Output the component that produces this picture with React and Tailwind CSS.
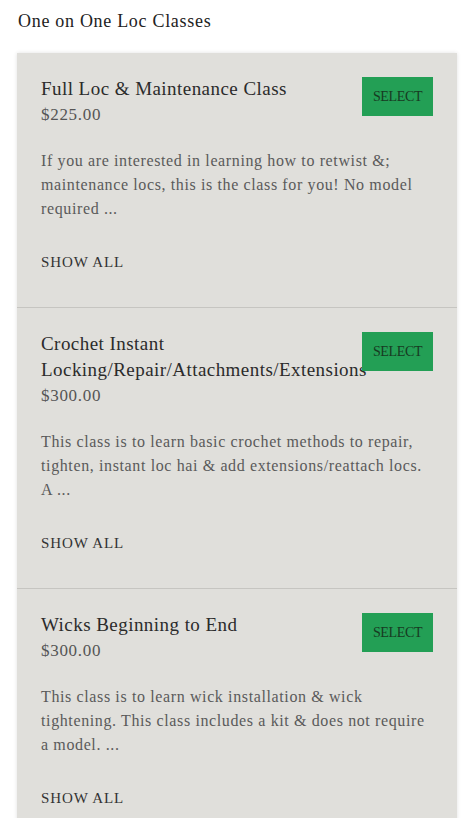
import React from 'react';

const CLASSES = [
  {
    title: 'Full Loc & Maintenance Class',
    price: '$225.00',
    desc: 'If you are interested in learning how to retwist &; maintenance locs, this is the class for you! No model required ...',
  },
  {
    title: 'Crochet Instant Locking/Repair/Attachments/Extensions',
    price: '$300.00',
    desc: 'This class is to learn basic crochet methods to repair, tighten, instant loc hai & add extensions/reattach locs. A ...',
  },
  {
    title: 'Wicks Beginning to End',
    price: '$300.00',
    desc: 'This class is to learn wick installation & wick tightening. This class includes a kit & does not require a model. ...',
  },
];

const ClassCard = ({ item, last }) => (
  <div className={`px-6 pt-6 pb-[33px] ${last ? '' : 'border-b border-[#c6c5c1]'}`}>
    <div className="flex items-start">
      <div className="flex-1 min-w-0">
        <h3 className="text-[19px] leading-[26px] tracking-[0.45px] text-[#2b2b2b] -mt-[1px]">{item.title}</h3>
        <div className="text-[17px] leading-[26px] tracking-[0.7px] text-[#555]">{item.price}</div>
      </div>
      <button className="shrink-0 w-[71px] h-[39px] bg-[#239f55] text-[#173a22] text-[14px] tracking-tight">
        SELECT
      </button>
    </div>
    <p className="mt-[21px] text-[16px] leading-[24px] tracking-[0.62px] text-[#5a5a5a]">{item.desc}</p>
    <div className="mt-[29px] text-[15px] leading-[24px] tracking-[0.9px] text-[#333]">SHOW ALL</div>
  </div>
);

export default function App() {
  return (
    <div
      className="min-h-screen bg-white"
      style={{ fontFamily: '"Liberation Serif", "DejaVu Serif", serif' }}
    >
      <div className="px-[17px] pt-[8px]">
        <h2 className="text-[18px] leading-[26px] tracking-[0.7px] text-[#222] pl-[1px]">One on One Loc Classes</h2>
        <div className="mt-[19px] bg-[#e0dfdb] shadow-[0_0_4px_rgba(0,0,0,0.12)]">
          {CLASSES.map((c, i) => (
            <ClassCard key={i} item={c} last={i === CLASSES.length - 1} />
          ))}
        </div>
      </div>
    </div>
  );
}
